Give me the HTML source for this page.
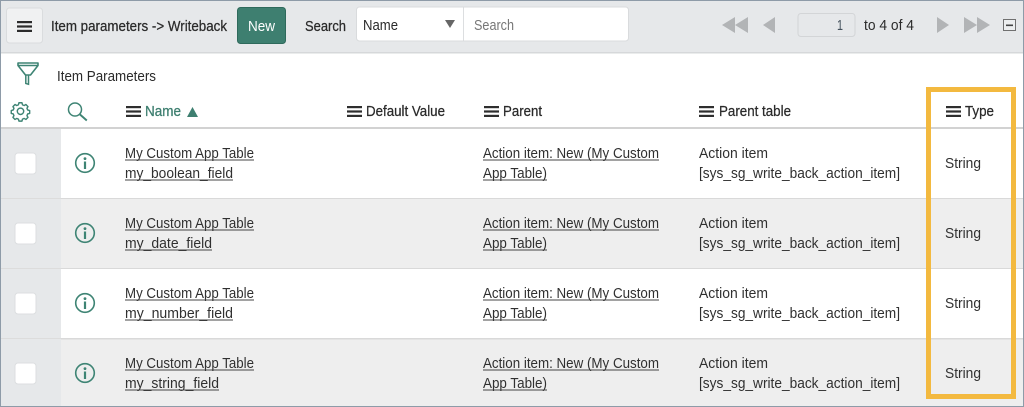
<!DOCTYPE html>
<html lang="en">
<head>
<meta charset="utf-8">
<title>Item Parameters</title>
<style>
html,body{margin:0;padding:0;background:#fff;width:1024px;height:407px;overflow:hidden}
svg{display:block}
text{font-family:"Liberation Sans",sans-serif;font-size:15px;fill:#2a2a2a}
.h{font-weight:400;stroke:#2a2a2a;stroke-width:.25px}
.l{fill:#303030}
</style>
</head>
<body>
<svg width="1024" height="407" viewBox="0 0 1024 407" xmlns="http://www.w3.org/2000/svg">
<defs>
<g id="ham"><rect x="0" y="0" width="15" height="2.2" fill="#2e2e2e"/><rect x="0" y="4.4" width="15" height="2.2" fill="#2e2e2e"/><rect x="0" y="8.8" width="15" height="2.2" fill="#2e2e2e"/></g>
<g id="info"><circle cx="0" cy="0" r="9.3" fill="none" stroke="#3e8474" stroke-width="1.6"/><rect x="-1.1" y="-1.5" width="2.2" height="7.5" fill="#3e8474"/><circle cx="0" cy="-4.4" r="1.4" fill="#3e8474"/></g>
</defs>
<rect width="1024" height="407" fill="#fff"/>

<!-- header -->
<rect x="0" y="0" width="1024" height="52" fill="#e6e8ea"/>
<rect x="0" y="52" width="1024" height="1.5" fill="#d6d8da"/>
<rect x="6.5" y="8" width="36" height="35" rx="3" fill="#f0f1f2" stroke="#dadcde"/>
<g transform="translate(17,21)"><rect width="15" height="2.2" fill="#2b2b2b"/><rect y="4.4" width="15" height="2.2" fill="#2b2b2b"/><rect y="8.8" width="15" height="2.2" fill="#2b2b2b"/></g>
<text x="51" y="31" textLength="176" lengthAdjust="spacingAndGlyphs" class="h">Item parameters -&gt; Writeback</text>
<rect x="237.5" y="7.5" width="48" height="36" rx="3" fill="#3e7f70" stroke="#2f6a5c"/>
<text x="248" y="31" textLength="27" lengthAdjust="spacingAndGlyphs" style="fill:#fff">New</text>
<text x="305" y="31" textLength="41" lengthAdjust="spacingAndGlyphs" class="h">Search</text>

<rect x="356.5" y="7" width="272" height="34" rx="3" fill="#fff" stroke="#d9dbdd"/>
<rect x="463" y="7.5" width="1" height="33" fill="#dcdee0"/>
<text x="363" y="30" textLength="35" lengthAdjust="spacingAndGlyphs">Name</text>
<path d="M445 20h10l-5 8z" fill="#666"/>
<text x="474" y="30" textLength="40" lengthAdjust="spacingAndGlyphs" style="fill:#777">Search</text>

<!-- pagination -->
<path d="M735 17v16l-13-8zM748 17v16l-13-8z" fill="#b2b4b6"/>
<path d="M775 17v16l-12-8z" fill="#b2b4b6"/>
<rect x="798" y="13.5" width="57" height="23" rx="3" fill="#e6e8ea" stroke="#d3d5d7"/>
<text x="837" y="30" textLength="6" lengthAdjust="spacingAndGlyphs" style="fill:#44505c">1</text>
<text x="864" y="30" textLength="50" lengthAdjust="spacingAndGlyphs">to 4 of 4</text>
<path d="M937 17v16l12-8z" fill="#b2b4b6"/>
<path d="M964 17v16l13-8zM977 17v16l13-8z" fill="#b2b4b6"/>
<rect x="1003.5" y="19.5" width="12" height="11" fill="#eceeef" stroke="#707070"/>
<rect x="1006" y="24.5" width="7" height="1.6" fill="#444"/>

<!-- filter -->
<path d="M18 63h20v2.500l-7.500 9.500h-5l-7.500-9.500zM18 65.500h20" fill="none" stroke="#3e8474" stroke-width="1.600" stroke-linejoin="round"/>
<path d="M25.800 75v8.500l2.700.8v-9.300" fill="none" stroke="#3e8474" stroke-width="1.500"/>
<text x="57" y="81" textLength="99" lengthAdjust="spacingAndGlyphs">Item Parameters</text>

<!-- gear -->
<g transform="translate(20.500,111.300) scale(.84) translate(-20.300,-111.700)">
<path d="M18.500 101.500h3.500l.7 2.500 2 .8 2-1.200 2.500 2.500-1.200 2 .8 2 2.400.7v3.400l-2.400.7-.8 2 1.200 2-2.500 2.500-2-1.200-2 .8-.7 2.400h-3.500l-.7-2.400-2-.8-2 1.200-2.500-2.500 1.200-2-.8-2-2.400-.7v-3.400l2.400-.7.8-2-1.200-2 2.500-2.500 2 1.200 2-.8z" fill="none" stroke="#3e8474" stroke-width="1.700" stroke-linejoin="round"/>
<circle cx="20.300" cy="111.700" r="3.800" fill="none" stroke="#3e8474" stroke-width="1.700"/>
</g>
<!-- search -->
<circle cx="75" cy="109.500" r="6.500" fill="none" stroke="#3e8474" stroke-width="1.500"/>
<path d="M80 114.500l6.800 6" stroke="#3e8474" stroke-width="1.900" fill="none"/>

<!-- column heads -->
<use href="#ham" x="126" y="106"/>
<text x="145" y="116" textLength="36" lengthAdjust="spacingAndGlyphs" style="fill:#3e7f70;stroke:#3e7f70;stroke-width:.3px">Name</text>
<path d="M187 117l5.500-10 5.500 10z" fill="#3e7f70"/>
<use href="#ham" x="347" y="106"/>
<text x="366" y="116" textLength="79" lengthAdjust="spacingAndGlyphs" class="h">Default Value</text>
<use href="#ham" x="484" y="106"/>
<text x="503" y="116" textLength="39" lengthAdjust="spacingAndGlyphs" class="h">Parent</text>
<use href="#ham" x="699" y="106"/>
<text x="719" y="116" textLength="72" lengthAdjust="spacingAndGlyphs" class="h">Parent table</text>
<use href="#ham" x="946" y="106"/>
<text x="965" y="116" textLength="29" lengthAdjust="spacingAndGlyphs" class="h">Type</text>
<rect x="0" y="127" width="1024" height="2" fill="#d2d2d2"/>

<!-- row backgrounds -->
<rect x="0" y="199" width="1024" height="69" fill="#eeeeee"/>
<rect x="0" y="339" width="1024" height="68" fill="#eeeeee"/>
<rect x="0" y="198" width="1024" height="1" fill="#d9d9d9"/>
<rect x="0" y="268" width="1024" height="1" fill="#d9d9d9"/>
<rect x="0" y="338" width="1024" height="1.500" fill="#d9d9d9"/>
<rect x="0" y="129" width="61" height="278" fill="#e6e8ea"/>
<rect x="0" y="198" width="61" height="1" fill="#dcdcdc"/>
<rect x="0" y="268" width="61" height="1" fill="#dcdcdc"/>
<rect x="0" y="338" width="61" height="1" fill="#dcdcdc"/>

<!-- row 1 -->
<rect x="15" y="153" width="21" height="21" rx="3" fill="#fff" stroke="#dcdee0"/>
<use href="#info" x="85" y="163"/>
<text class="l" x="125" y="158" textLength="129" lengthAdjust="spacingAndGlyphs">My Custom App Table</text>
<rect x="125" y="159.500" width="129" height="1" fill="#444"/>
<text class="l" x="125" y="178" textLength="108" lengthAdjust="spacingAndGlyphs">my_boolean_field</text>
<rect x="125" y="179.500" width="108" height="1" fill="#444"/>
<text class="l" x="483" y="158" textLength="176" lengthAdjust="spacingAndGlyphs">Action item: New (My Custom</text>
<rect x="483" y="159.500" width="176" height="1" fill="#444"/>
<text class="l" x="483" y="178" textLength="64" lengthAdjust="spacingAndGlyphs">App Table)</text>
<rect x="483" y="179.500" width="64" height="1" fill="#444"/>
<text class="l" x="699" y="158" textLength="69" lengthAdjust="spacingAndGlyphs">Action item</text>
<text class="l" x="699" y="178" textLength="201" lengthAdjust="spacingAndGlyphs">[sys_sg_write_back_action_item]</text>
<text class="l" x="945" y="168" textLength="36" lengthAdjust="spacingAndGlyphs">String</text>

<!-- row 2 -->
<rect x="15" y="223" width="21" height="21" rx="3" fill="#fff" stroke="#dcdee0"/>
<use href="#info" x="85" y="233"/>
<text class="l" x="125" y="228" textLength="129" lengthAdjust="spacingAndGlyphs">My Custom App Table</text>
<rect x="125" y="229.500" width="129" height="1" fill="#444"/>
<text class="l" x="125" y="248" textLength="87" lengthAdjust="spacingAndGlyphs">my_date_field</text>
<rect x="125" y="249.500" width="87" height="1" fill="#444"/>
<text class="l" x="483" y="228" textLength="176" lengthAdjust="spacingAndGlyphs">Action item: New (My Custom</text>
<rect x="483" y="229.500" width="176" height="1" fill="#444"/>
<text class="l" x="483" y="248" textLength="64" lengthAdjust="spacingAndGlyphs">App Table)</text>
<rect x="483" y="249.500" width="64" height="1" fill="#444"/>
<text class="l" x="699" y="228" textLength="69" lengthAdjust="spacingAndGlyphs">Action item</text>
<text class="l" x="699" y="248" textLength="201" lengthAdjust="spacingAndGlyphs">[sys_sg_write_back_action_item]</text>
<text class="l" x="945" y="238" textLength="36" lengthAdjust="spacingAndGlyphs">String</text>

<!-- row 3 -->
<rect x="15" y="293" width="21" height="21" rx="3" fill="#fff" stroke="#dcdee0"/>
<use href="#info" x="85" y="303"/>
<text class="l" x="125" y="298" textLength="129" lengthAdjust="spacingAndGlyphs">My Custom App Table</text>
<rect x="125" y="299.500" width="129" height="1" fill="#444"/>
<text class="l" x="125" y="318" textLength="108" lengthAdjust="spacingAndGlyphs">my_number_field</text>
<rect x="125" y="319.500" width="108" height="1" fill="#444"/>
<text class="l" x="483" y="298" textLength="176" lengthAdjust="spacingAndGlyphs">Action item: New (My Custom</text>
<rect x="483" y="299.500" width="176" height="1" fill="#444"/>
<text class="l" x="483" y="318" textLength="64" lengthAdjust="spacingAndGlyphs">App Table)</text>
<rect x="483" y="319.500" width="64" height="1" fill="#444"/>
<text class="l" x="699" y="298" textLength="69" lengthAdjust="spacingAndGlyphs">Action item</text>
<text class="l" x="699" y="318" textLength="201" lengthAdjust="spacingAndGlyphs">[sys_sg_write_back_action_item]</text>
<text class="l" x="945" y="308" textLength="36" lengthAdjust="spacingAndGlyphs">String</text>

<!-- row 4 -->
<rect x="15" y="363" width="21" height="21" rx="3" fill="#fff" stroke="#dcdee0"/>
<use href="#info" x="85" y="373"/>
<text class="l" x="125" y="368" textLength="129" lengthAdjust="spacingAndGlyphs">My Custom App Table</text>
<rect x="125" y="369.500" width="129" height="1" fill="#444"/>
<text class="l" x="125" y="388" textLength="94" lengthAdjust="spacingAndGlyphs">my_string_field</text>
<rect x="125" y="389.500" width="94" height="1" fill="#444"/>
<text class="l" x="483" y="368" textLength="176" lengthAdjust="spacingAndGlyphs">Action item: New (My Custom</text>
<rect x="483" y="369.500" width="176" height="1" fill="#444"/>
<text class="l" x="483" y="388" textLength="64" lengthAdjust="spacingAndGlyphs">App Table)</text>
<rect x="483" y="389.500" width="64" height="1" fill="#444"/>
<text class="l" x="699" y="368" textLength="69" lengthAdjust="spacingAndGlyphs">Action item</text>
<text class="l" x="699" y="388" textLength="201" lengthAdjust="spacingAndGlyphs">[sys_sg_write_back_action_item]</text>
<text class="l" x="945" y="378" textLength="36" lengthAdjust="spacingAndGlyphs">String</text>

<!-- highlight -->
<rect x="928.500" y="89.500" width="85" height="307" fill="none" stroke="#f3b93f" stroke-width="5"/>

<!-- outer frame -->
<rect x="0" y="0" width="1024" height="1" fill="#8e9ba8"/>
<rect x="0" y="406" width="1024" height="1" fill="#8e9ba8"/>
<rect x="0" y="0" width="1" height="407" fill="#8e9ba8"/>
<rect x="1023" y="0" width="1" height="407" fill="#8e9ba8"/>
</svg>
</body>
</html>
